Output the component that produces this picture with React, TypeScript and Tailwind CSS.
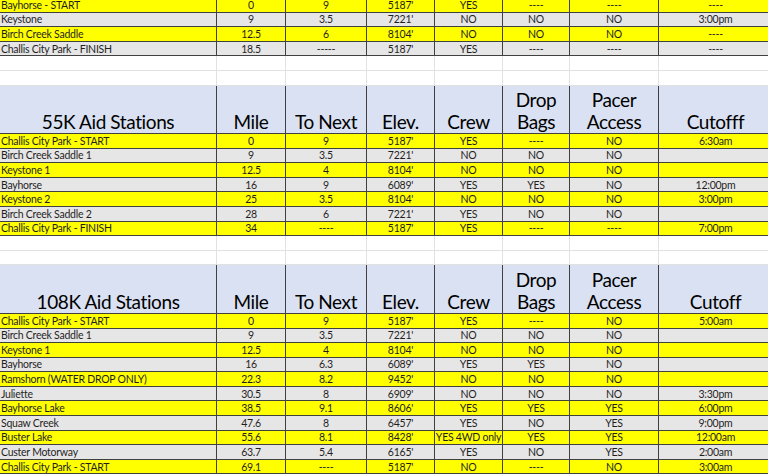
type Row = { cells: string[]; yellow: boolean };

const GRID = "grid grid-cols-[217px_69px_81px_68px_68px_67px_89px_114px]";

const r = (yellow: boolean, ...cells: string[]): Row => ({ cells, yellow });

// tail of the previous table, scrolled partly off the top
const topRows: Row[] = [
  r(true, "Bayhorse - START", "0", "9", "5187'", "YES", "----", "----", "----"),
  r(false, "Keystone", "9", "3.5", "7221'", "NO", "NO", "NO", "3:00pm"),
  r(true, "Birch Creek Saddle", "12.5", "6", "8104'", "NO", "NO", "NO", "----"),
  r(false, "Challis City Park - FINISH", "18.5", "-----", "5187'", "YES", "----", "----", "----"),
];

const rows55: Row[] = [
  r(true, "Challis City Park - START", "0", "9", "5187'", "YES", "----", "NO", "6:30am"),
  r(false, "Birch Creek Saddle 1", "9", "3.5", "7221'", "NO", "NO", "NO", ""),
  r(true, "Keystone 1", "12.5", "4", "8104'", "NO", "NO", "NO", ""),
  r(false, "Bayhorse", "16", "9", "6089'", "YES", "YES", "NO", "12:00pm"),
  r(true, "Keystone 2", "25", "3.5", "8104'", "NO", "NO", "NO", "3:00pm"),
  r(false, "Birch Creek Saddle 2", "28", "6", "7221'", "YES", "NO", "NO", ""),
  r(true, "Challis City Park - FINISH", "34", "----", "5187'", "YES", "----", "----", "7:00pm"),
];

const rows108: Row[] = [
  r(true, "Challis City Park - START", "0", "9", "5187'", "YES", "----", "NO", "5:00am"),
  r(false, "Birch Creek Saddle 1", "9", "3.5", "7221'", "NO", "NO", "NO", ""),
  r(true, "Keystone 1", "12.5", "4", "8104'", "NO", "NO", "NO", ""),
  r(false, "Bayhorse", "16", "6.3", "6089'", "YES", "YES", "NO", ""),
  r(true, "Ramshorn (WATER DROP ONLY)", "22.3", "8.2", "9452'", "NO", "NO", "NO", ""),
  r(false, "Juliette", "30.5", "8", "6909'", "NO", "NO", "NO", "3:30pm"),
  r(true, "Bayhorse Lake", "38.5", "9.1", "8606'", "YES", "YES", "YES", "6:00pm"),
  r(false, "Squaw Creek", "47.6", "8", "6457'", "YES", "NO", "YES", "9:00pm"),
  r(true, "Buster Lake", "55.6", "8.1", "8428'", "YES 4WD only", "YES", "YES", "12:00am"),
  r(false, "Custer Motorway", "63.7", "5.4", "6165'", "YES", "NO", "YES", "2:00am"),
  r(true, "Challis City Park - START", "69.1", "----", "5187'", "NO", "----", "NO", "3:00am"),
];

function DataRow({ row }: { row: Row }) {
  return (
    <div
      className={`${GRID} h-[14.6px] border-b border-[#404040] text-[10.5px] leading-[13px] tracking-[-0.25px] text-[#1f1f1f] ${
        row.yellow ? "bg-[#ffff00]" : "bg-[#e7e6e6]"
      }`}
    >
      {row.cells.map((c, i) => (
        <div
          key={i}
          className={`flex items-center overflow-hidden whitespace-nowrap border-r border-[#404040] pt-px ${
            i === 0 ? "justify-start pl-px" : "justify-center"
          }`}
        >
          {c}
        </div>
      ))}
    </div>
  );
}

function BlankRow() {
  return (
    <div className={`${GRID} h-[14.6px] border-b border-[#e1e1e1] bg-white`}>
      {Array.from({ length: 8 }).map((_, i) => (
        <div key={i} className="border-r border-[#e1e1e1]" />
      ))}
    </div>
  );
}

function HeaderRow({ title, cutoff }: { title: string; cutoff: string }) {
  const heads = [title, "Mile", "To Next", "Elev.", "Crew", "Drop\nBags", "Pacer\nAccess", cutoff];
  return (
    <div
      className={`${GRID} h-[48.5px] border-b border-[#404040] bg-[#d9e1f2] text-[19px] leading-[22px] tracking-[-0.4px] text-black`}
    >
      {heads.map((h, i) => (
        <div
          key={i}
          className="flex flex-col items-center justify-end whitespace-pre border-r border-[#404040] text-center"
        >
          {h}
        </div>
      ))}
    </div>
  );
}

function Section({ title, cutoff, rows }: { title: string; cutoff: string; rows: Row[] }) {
  return (
    <div>
      <HeaderRow title={title} cutoff={cutoff} />
      {rows.map((row, i) => (
        <DataRow key={i} row={row} />
      ))}
    </div>
  );
}

export default function App() {
  return (
    <div className="h-[474px] w-[768px] overflow-hidden bg-white font-['Lato',sans-serif]">
      <div className="-mt-[2px] w-[773px]">
        {topRows.map((row, i) => (
          <DataRow key={i} row={row} />
        ))}
        <BlankRow />
        <BlankRow />
        <Section title="55K Aid Stations" cutoff="Cutofff" rows={rows55} />
        <BlankRow />
        <BlankRow />
        <Section title="108K Aid Stations" cutoff="Cutoff" rows={rows108} />
      </div>
    </div>
  );
}
